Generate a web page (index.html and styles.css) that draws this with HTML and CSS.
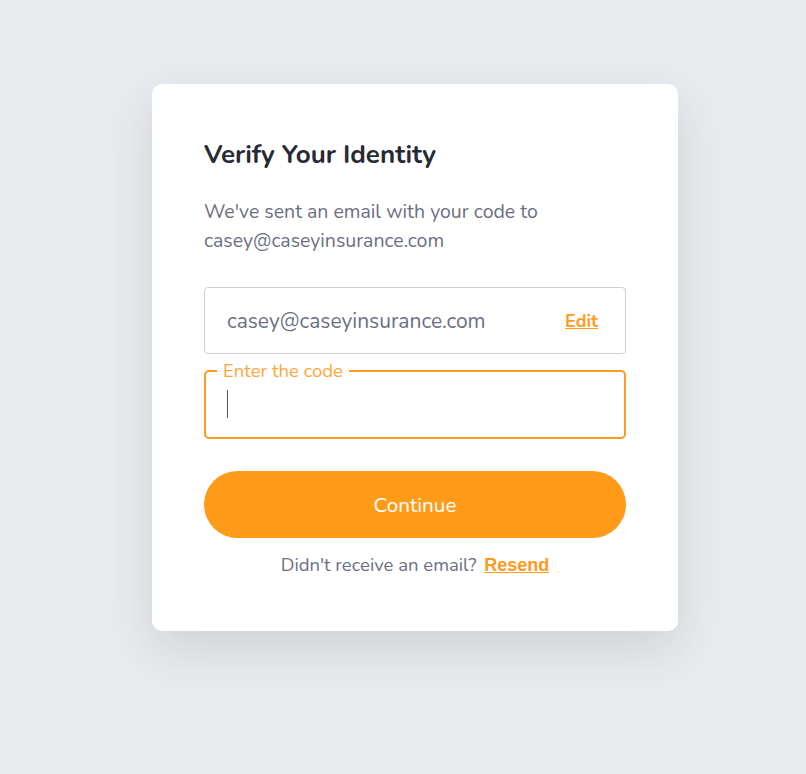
FILE: index.html
```html
<!DOCTYPE html>
<html>
<head>
<meta charset="utf-8">
<link rel="stylesheet" href="styles.css">
</head>
<body>
<main class="card">
  <h1 class="title">Verify Your Identity</h1>
  <p class="desc">We've sent an email with your code to casey@caseyinsurance.com</p>
  <div class="email-box">
    <span class="email">casey@caseyinsurance.com</span>
    <a class="edit" href="#">Edit</a>
  </div>
  <fieldset class="code-field">
    <legend class="code-legend">Enter the code</legend>
    <span class="caret"></span>
  </fieldset>
  <button class="continue">Continue</button>
  <p class="resend-line">Didn't receive an email? <a class="resend" href="#">Resend</a></p>
</main>
</body>
</html>
```
FILE: styles.css
```css
html {
  margin: 0;
  padding: 0;
  height: 100%;
  background: #e9ecef;
}
body {
  box-sizing: border-box;
  margin: 0;
  min-height: 100%;
  padding: 84px 0 0 152px;
  background: #e9ecef;
  font-family: "Nunito", "Lato", "Noto Sans", sans-serif;
}
.card {
  box-sizing: border-box;
  width: 526px;
  height: 547px;
  background: #fff;
  border-radius: 10px;
  padding: 54px 52px 0 52px;
  box-shadow: 0 18px 50px rgba(40, 50, 60, 0.14);
}
.title {
  margin: 0;
  font-size: 26px;
  line-height: 34px;
  font-weight: 700;
  color: #272a33;
}
.desc {
  margin: 25px 0 0 0;
  font-size: 19.5px;
  line-height: 29px;
  color: #6c6f82;
  width: 380px;
}
.email-box {
  box-sizing: border-box;
  margin-top: 32px;
  height: 67px;
  border: 1px solid #cfd0d4;
  border-radius: 4px;
  display: flex;
  align-items: center;
  justify-content: space-between;
  padding: 0 27px 0 22px;
}
.email {
  font-size: 21px;
  color: #6c6f82;
}
.edit {
  font-size: 18px;
  font-weight: 700;
  color: #ff9a1a;
  text-decoration: underline;
}
.code-field {
  box-sizing: border-box;
  margin: 7px 0 0 0;
  height: 78px;
  border: 2px solid #ff9a1a;
  border-radius: 5px;
  padding: 0 0 0 21px;
  display: flex;
  align-items: center;
  min-width: 0;
}
.code-legend {
  margin-left: -10px;
  padding: 0 6px;
  font-size: 18.5px;
  line-height: 20px;
  color: #ffa63a;
}
.caret {
  display: block;
  width: 1px;
  height: 28px;
  background: #555;
  margin-top: -10px;
}
.continue {
  display: block;
  width: 100%;
  height: 67px;
  margin-top: 32px;
  border: none;
  border-radius: 34px;
  background: #ff9b19;
  color: #fff;
  font-family: inherit;
  font-size: 20.7px;
}
.resend-line {
  margin: 16px 0 0 0;
  text-align: center;
  font-size: 18.5px;
  line-height: 22px;
  color: #6c6f82;
}
.resend {
  font-family: "Liberation Sans", Arial, sans-serif;
  font-weight: 700;
  font-size: 18px;
  color: #ff9a1a;
  text-decoration: underline;
  margin-left: 3px;
}
```
